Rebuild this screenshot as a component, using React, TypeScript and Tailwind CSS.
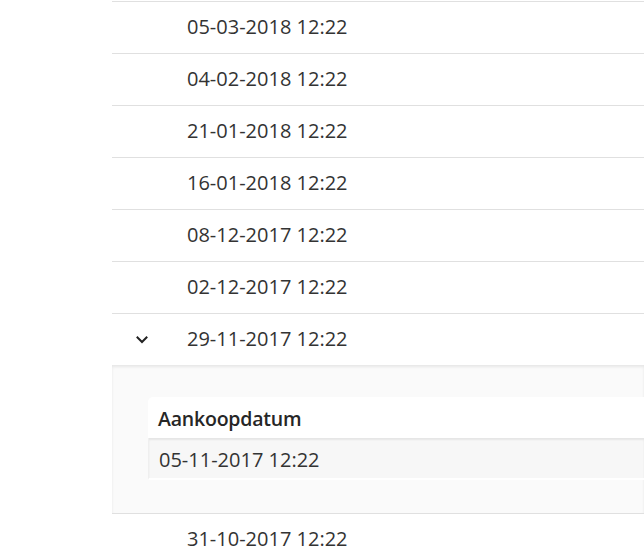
import React from "react";

const before = [
  "05-03-2018 12:22",
  "04-02-2018 12:22",
  "21-01-2018 12:22",
  "16-01-2018 12:22",
  "08-12-2017 12:22",
  "02-12-2017 12:22",
];

function Row({ date, open }: { date: string; open?: boolean }) {
  return (
    <div className="flex h-[52px] items-center border-t border-[#e0e0e0] bg-white pb-[2px]">
      <div className="flex w-[60px] shrink-0 items-center justify-center pt-[2px]">
        {open && (
          <svg width="12" height="8" viewBox="0 0 12 8" fill="none">
            <polyline points="1.5,1.5 6,6 10.5,1.5" stroke="#222" strokeWidth="2" strokeLinecap="square" strokeLinejoin="miter" />
          </svg>
        )}
      </div>
      <div className="pl-[15px] text-[20px] text-[#333]">{date}</div>
    </div>
  );
}

export default function App() {
  return (
    <div
      className="flex h-[560px] w-[644px] overflow-hidden bg-white pt-[1px]"
      style={{ fontFamily: '"Open Sans", "Noto Sans", sans-serif' }}
    >
      <div className="w-[112px] shrink-0" />
      <div className="flex-1 min-w-0">
        {before.map((d) => (
          <Row key={d} date={d} />
        ))}
        <Row date="29-11-2017 12:22" open />
        <div className="h-[148px] bg-[#fafafa] pl-[36px] pt-[32px] shadow-[inset_0_2px_3px_rgba(0,0,0,0.08)]">
          <div className="flex flex-col">
            <div className="flex h-[41px] items-center rounded-tl-[5px] bg-white pl-[10px] pt-[3px] text-[19.5px] font-semibold tracking-[-0.2px] text-[#262626]">
              Aankoopdatum
            </div>
            <div className="flex h-[42px] items-center border-l border-b-2 border-[#efefef] border-b-white bg-[#f7f7f7] pl-[10px] pt-[3px] text-[20px] text-[#333] shadow-[inset_0_2px_2px_rgba(0,0,0,0.07)]">
              05-11-2017 12:22
            </div>
          </div>
        </div>
        <Row date="31-10-2017 12:22" />
      </div>
    </div>
  );
}
